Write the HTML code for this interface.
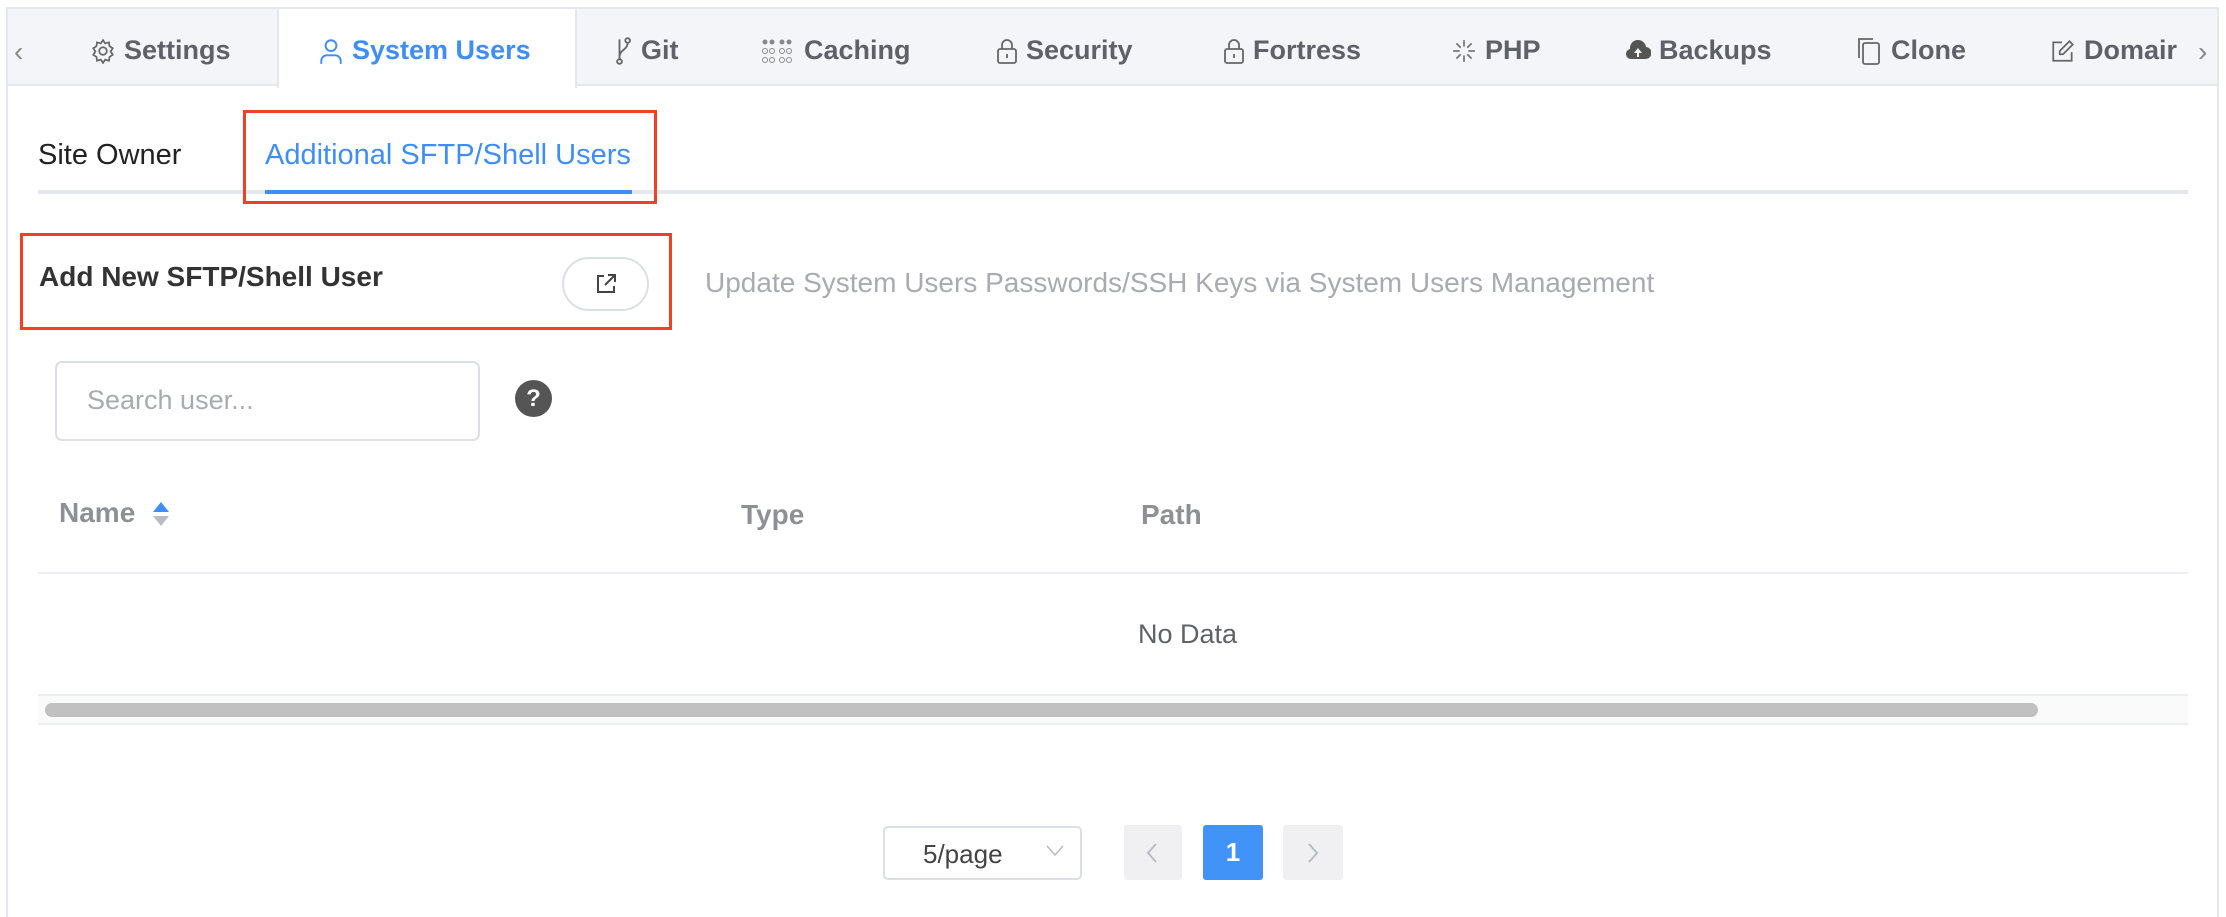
<!DOCTYPE html>
<html><head><meta charset="utf-8"><style>
*{box-sizing:border-box;margin:0;padding:0}
body{width:2226px;height:912px;background:#fff;font-family:"Liberation Sans",Arial,sans-serif;position:relative;overflow:hidden}
.a{position:absolute}
.tabbar{left:6px;top:7px;width:2213px;height:79px;background:#f4f5f9;border:2px solid #e4e7ed}
.frame{left:6px;top:7px;width:2213px;height:910px;border-left:2px solid #e4e7ed;border-right:2px solid #e4e7ed}
.tab{top:11px;height:79px;display:flex;align-items:center;font-size:27px;font-weight:bold;color:#5f6168;white-space:nowrap}
.tab svg{margin-right:8px}
.red{border:3px solid #ef4124}
</style></head><body>
<div class="a frame"></div>
<div class="a tabbar"></div>
<div class="a" style="left:277px;top:7px;width:300px;height:81px;background:#fff;border-left:2px solid #e4e7ed;border-right:2px solid #e4e7ed;border-top:2px solid #e4e7ed"></div>
<div class="a" style="left:14px;top:36px;font-size:28px;color:#888">‹</div>
<div class="a" style="left:2198px;top:36px;font-size:28px;color:#888">›</div>

<div class="a tab" style="left:90px"><svg width="26" height="26" viewBox="0 0 24 24" fill="none" stroke="#666" stroke-width="1.6"><circle cx="12" cy="12" r="3.5"/><path d="M12 2l2 3 3.5-1 .5 3.5 3 2-2 3 2 3-3 2-.5 3.5-3.5-1-2 3-2-3-3.5 1-.5-3.5-3-2 2-3-2-3 3-2 .5-3.5 3.5 1z"/></svg>Settings</div>
<div class="a tab" style="left:318px;color:#3f8ef7"><svg width="26" height="28" viewBox="0 0 24 26" fill="none" stroke="#3f8ef7" stroke-width="1.8"><circle cx="12" cy="8" r="5"/><path d="M3 25v-3a5 5 0 015-5h8a5 5 0 015 5v3"/></svg>System Users</div>
<div class="a tab" style="left:613px"><svg width="20" height="28" viewBox="0 0 14 24" fill="none" stroke="#666" stroke-width="1.6"><circle cx="4" cy="21" r="2"/><circle cx="11" cy="3" r="2"/><path d="M4 2v17M11 5c0 6-7 6-7 12"/></svg>Git</div>
<div class="a tab" style="left:762px"><svg width="34" height="24" viewBox="0 0 34 24" fill="#888"><circle cx="3" cy="3" r="2.5"/><circle cx="10" cy="3" r="2.5"/><circle cx="20" cy="3" r="2.5"/><circle cx="27" cy="3" r="2.5"/><g fill="none" stroke="#888"><circle cx="3" cy="12" r="2.5"/><circle cx="10" cy="12" r="2.5"/><circle cx="20" cy="12" r="2.5"/><circle cx="27" cy="12" r="2.5"/><circle cx="3" cy="21" r="2.5"/><circle cx="10" cy="21" r="2.5"/><circle cx="20" cy="21" r="2.5"/><circle cx="27" cy="21" r="2.5"/></g></svg>Caching</div>
<div class="a tab" style="left:996px"><svg width="22" height="28" viewBox="0 0 22 28" fill="none" stroke="#666" stroke-width="1.8"><rect x="2" y="12" width="18" height="14" rx="2"/><path d="M6 12V8a5 5 0 0110 0v4M11 17v4"/></svg>Security</div>
<div class="a tab" style="left:1223px"><svg width="22" height="28" viewBox="0 0 22 28" fill="none" stroke="#666" stroke-width="1.8"><rect x="2" y="12" width="18" height="14" rx="2"/><path d="M6 12V8a5 5 0 0110 0v4M11 17v4"/></svg>Fortress</div>
<div class="a tab" style="left:1451px"><svg width="26" height="26" viewBox="0 0 24 24" fill="none" stroke="#777" stroke-width="1.6"><path d="M12 2v6M12 16v6M2 12h6M16 12h6M5 5l4 4M15 15l4 4M19 5l-4 4M9 15l-4 4"/></svg>PHP</div>
<div class="a tab" style="left:1625px"><svg width="26" height="24" viewBox="0 0 26 24" fill="#555"><path d="M6 20a5 5 0 01-1-9.9A8 8 0 0121 8a6 6 0 01-1 12z"/><path d="M13 9l-4 5h3v4h2v-4h3z" fill="#f4f5f9"/></svg>Backups</div>
<div class="a tab" style="left:1855px"><svg width="28" height="30" viewBox="0 0 28 30" fill="none" stroke="#666" stroke-width="1.8"><path d="M4 22V3h14"/><rect x="8" y="7" width="16" height="21" rx="2"/></svg>Clone</div>
<div class="a tab" style="left:2050px"><svg width="26" height="26" viewBox="0 0 24 24" fill="none" stroke="#666" stroke-width="1.6"><path d="M20 13v8H3V4h8"/><path d="M18 3l3 3-9 9H9v-3z"/></svg>Domair</div>

<div class="a" style="left:38px;top:139px;font-size:29px;color:#222">Site Owner</div>
<div class="a" style="left:265px;top:139px;font-size:29px;color:#3f8ef7">Additional SFTP/Shell Users</div>
<div class="a" style="left:38px;top:190px;width:2150px;height:4px;background:#e4e7ed"></div>
<div class="a" style="left:265px;top:190px;width:367px;height:4px;background:#3f8ef7"></div>
<div class="a red" style="left:243px;top:110px;width:414px;height:94px"></div>

<div class="a red" style="left:20px;top:233px;width:652px;height:97px"></div>
<div class="a" style="left:39px;top:261px;font-size:28px;font-weight:bold;color:#333">Add New SFTP/Shell User</div>
<div class="a" style="left:562px;top:257px;width:87px;height:54px;border:2px solid #dcdfe6;border-radius:27px;display:flex;align-items:center;justify-content:center"><svg width="24" height="24" viewBox="0 0 24 24" fill="none" stroke="#444" stroke-width="2"><path d="M10 4H4v16h16v-6"/><path d="M14 3h7v7M21 3l-10 10"/></svg></div>
<div class="a" style="left:705px;top:267px;font-size:28px;color:#a8abb2">Update System Users Passwords/SSH Keys via System Users Management</div>

<div class="a" style="left:55px;top:361px;width:425px;height:80px;border:2px solid #dcdfe6;border-radius:7px"></div>
<div class="a" style="left:87px;top:385px;font-size:27px;color:#a8abb2">Search user...</div>
<div class="a" style="left:515px;top:380px;width:37px;height:37px;border-radius:50%;background:#555;color:#fff;font-weight:bold;font-size:24px;text-align:center;line-height:37px">?</div>

<div class="a" style="left:59px;top:497px;font-size:28px;font-weight:bold;color:#8e9096">Name</div>
<svg class="a" style="left:152px;top:501px" width="18" height="26" viewBox="0 0 18 26"><path d="M9 1l8 10H1z" fill="#3f8ef7"/><path d="M9 25l8-10H1z" fill="#b8bcc4"/></svg>
<div class="a" style="left:741px;top:499px;font-size:28px;font-weight:bold;color:#8e9096">Type</div>
<div class="a" style="left:1141px;top:499px;font-size:28px;font-weight:bold;color:#8e9096">Path</div>
<div class="a" style="left:38px;top:572px;width:2150px;height:2px;background:#ebeef5"></div>
<div class="a" style="left:1138px;top:619px;font-size:27px;color:#606266">No Data</div>
<div class="a" style="left:38px;top:694px;width:2150px;height:31px;background:#fafafa;border-top:2px solid #ebeef5;border-bottom:2px solid #ebeef5"></div>
<div class="a" style="left:45px;top:703px;width:1993px;height:14px;background:#c1c1c1;border-radius:7px"></div>

<div class="a" style="left:883px;top:826px;width:199px;height:54px;border:2px solid #dcdfe6;border-radius:5px"></div>
<div class="a" style="left:923px;top:839px;font-size:26px;color:#444">5/page</div>
<svg class="a" style="left:1046px;top:845px" width="18" height="12" viewBox="0 0 18 12" fill="none" stroke="#b8bcc4" stroke-width="1.5"><path d="M1 1l8 9 8-9"/></svg>
<div class="a" style="left:1124px;top:825px;width:58px;height:55px;background:#f0f0f2;border-radius:3px"></div>
<svg class="a" style="left:1146px;top:842px" width="12" height="22" viewBox="0 0 12 22" fill="none" stroke="#b8bcc4" stroke-width="2"><path d="M10 2L2 11l8 9"/></svg>
<div class="a" style="left:1203px;top:825px;width:60px;height:55px;background:#4293f7;border-radius:3px;color:#fff;font-weight:bold;font-size:26px;text-align:center;line-height:55px">1</div>
<div class="a" style="left:1283px;top:825px;width:60px;height:55px;background:#f0f0f2;border-radius:3px"></div>
<svg class="a" style="left:1307px;top:842px" width="12" height="22" viewBox="0 0 12 22" fill="none" stroke="#b8bcc4" stroke-width="2"><path d="M2 2l8 9-8 9"/></svg>
</body></html>
